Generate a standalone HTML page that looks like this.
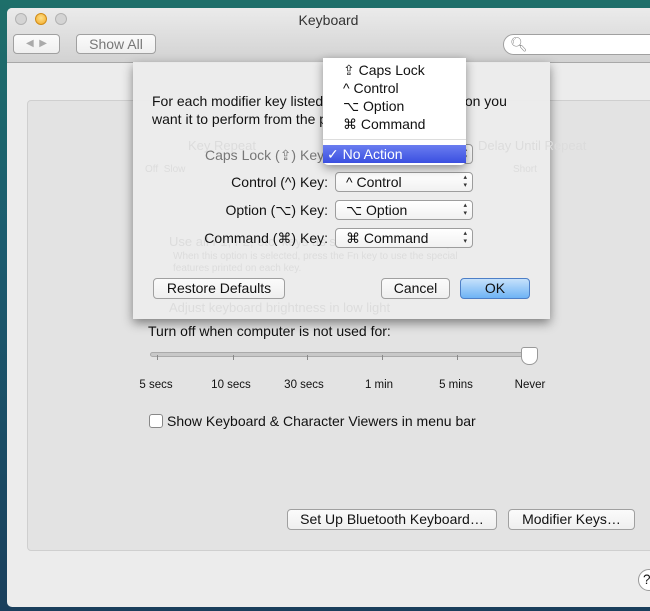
<!DOCTYPE html>
<html><head><style>
*{margin:0;padding:0;box-sizing:border-box}
body{width:650px;height:611px;overflow:hidden;background:linear-gradient(180deg,#1e6f6a 0%,#1b5b6e 40%,#1a3f5c 100%);font-family:"Liberation Sans",sans-serif;font-size:13.5px;color:#111;position:relative}
.win{position:absolute;left:7px;top:8px;width:650px;height:599px;background:#ececec;border-radius:5px 0 0 5px;overflow:hidden}
.tb{position:absolute;left:0;top:0;right:0;height:55px;background:linear-gradient(#ebebeb,#d2d2d2);border-bottom:1px solid #a8a8a8}
.light{position:absolute;top:5px;width:12px;height:12px;border-radius:50%;background:#d4d4d4;border:1px solid #b3b3b3}
.title{position:absolute;top:4px;left:0;right:7px;text-align:center;font-size:14px;color:#333}
.btn{position:absolute;background:linear-gradient(#fbfbfb,#efefef);border:1px solid #a0a0a0;border-radius:4px;text-align:center;font-size:14px}
.abs{position:absolute}
.box{position:absolute;left:20px;top:92px;width:640px;height:451px;border:1px solid #cfcfcf;border-radius:4px;background:#e3e3e3}
.sheet{position:absolute;left:133px;top:62px;width:417px;height:257px;background:rgba(236,236,236,.95);box-shadow:0 4px 10px rgba(0,0,0,.45)}
.pop{position:absolute;left:335px;width:138px;height:20px;background:linear-gradient(#fff,#f1f1f1);border:1px solid #9d9d9d;border-radius:4px;padding-left:10px;line-height:18px;font-size:14px}
.pop:after{content:"▴\A▾";white-space:pre;position:absolute;right:5px;top:1px;font-size:7px;line-height:8px;color:#333}
.lbl{position:absolute;width:200px;text-align:right;font-size:14px}
.menu{position:absolute;left:323px;top:58px;width:143px;height:107px;background:#fff;border-radius:0 0 5px 5px;box-shadow:0 3px 10px rgba(0,0,0,.4)}
.mi{position:absolute;left:20px;font-size:14px}
.tick{position:absolute;top:355px;width:1px;height:5px;background:#888}
.tl{position:absolute;top:379px;font-size:11.5px;width:60px;text-align:center}
.ghost{position:absolute;color:#dcdcdc;font-size:13px;white-space:nowrap}
</style></head><body>
<div class="win">
 <div class="tb">
  <div class="light" style="left:8px"></div>
  <div class="light" style="left:28px;background:radial-gradient(circle at 50% 40%,#fde08a,#f3a825);border-color:#d08c18"></div>
  <div class="light" style="left:48px"></div>
  <div class="title">Keyboard</div>
  <div class="btn" style="left:6px;top:26px;width:47px;height:20px;color:#aaa;font-size:10px;line-height:18px">◀ &nbsp;▶</div>
  <div class="btn" style="left:69px;top:26px;width:80px;height:20px;line-height:18px;color:#777">Show All</div>
  <div class="btn" style="left:496px;top:26px;width:160px;height:21px;border-radius:11px;background:#fff;text-align:left;padding-left:6px;color:#888;line-height:18px">&#x1F50D;&#xFE0E;</div>
 </div>
 <div class="box"></div>
</div>
<div class="abs" style="left:148px;top:323px;font-size:14px">Turn off when computer is not used for:</div>
<div class="abs" style="left:150px;width:380px;height:5px;border-radius:3px;background:#c8c8c8;border:1px solid #aaa;top:352px"></div>
<div class="abs" style="left:521px;top:347px;width:17px;height:18px;background:#fff;border:1px solid #999;border-radius:3px 3px 8px 8px"></div>
<div class="tick" style="left:157px"></div><div class="tick" style="left:233px"></div><div class="tick" style="left:307px"></div><div class="tick" style="left:382px"></div><div class="tick" style="left:457px"></div>
<div class="tl" style="left:126px">5 secs</div><div class="tl" style="left:201px">10 secs</div><div class="tl" style="left:274px">30 secs</div><div class="tl" style="left:349px">1 min</div><div class="tl" style="left:426px">5 mins</div><div class="tl" style="left:500px">Never</div>
<div class="abs" style="left:149px;top:414px;width:14px;height:14px;border:1px solid #888;border-radius:3px;background:#fff"></div>
<div class="abs" style="left:167px;top:413px;font-size:14px">Show Keyboard &amp; Character Viewers in menu bar</div>
<div class="btn" style="left:287px;top:509px;width:210px;height:21px;line-height:19px">Set Up Bluetooth Keyboard…</div>
<div class="btn" style="left:508px;top:509px;width:127px;height:21px;line-height:19px">Modifier Keys…</div>
<div class="abs" style="left:638px;top:569px;width:22px;height:22px;border-radius:50%;border:1px solid #999;background:#fff;padding-left:4px;line-height:20px">?</div>
<div class="sheet">
 <div class="ghost" style="left:55px;top:76px">Key Repeat</div>
 <div class="ghost" style="left:345px;top:76px">Delay Until Repeat</div>
 <div class="ghost" style="left:12px;top:102px;font-size:10px">Off &nbsp;Slow</div>
 <div class="ghost" style="left:380px;top:102px;font-size:10px">Short</div>
 <div class="ghost" style="left:36px;top:172px">Use all F1, F2, etc. keys as standard function keys</div>
 <div class="ghost" style="left:40px;top:189px;font-size:10px;line-height:12px">When this option is selected, press the Fn key to use the special<br>features printed on each key.</div>
 <div class="ghost" style="left:36px;top:238px">Adjust keyboard brightness in low light</div>
 <div class="abs" style="left:19px;top:30px;line-height:18px;font-size:14px">For each modifier key listed below, choose the action you<br>want it to perform from the pop-up menu:</div>
 <div class="lbl" style="top:85px;left:-5px;color:#777">Caps Lock (⇪) Key:</div>
 <div class="lbl" style="top:112px;left:-5px">Control (^) Key:</div>
 <div class="lbl" style="top:140px;left:-5px">Option (⌥) Key:</div>
 <div class="lbl" style="top:168px;left:-5px">Command (⌘) Key:</div>
 <div class="btn" style="left:20px;top:216px;width:132px;height:21px;line-height:19px">Restore Defaults</div>
 <div class="btn" style="left:248px;top:216px;width:69px;height:21px;line-height:19px">Cancel</div>
 <div class="btn" style="left:327px;top:216px;width:70px;height:21px;line-height:19px;background:linear-gradient(#c6e1fb,#6eb3f5);border-color:#4d7fc7">OK</div>
</div>
<div class="pop" style="top:144px;left:335px"></div>
<div class="pop" style="top:172px">^ Control</div>
<div class="pop" style="top:200px">⌥ Option</div>
<div class="pop" style="top:228px">⌘ Command</div>
<div class="menu">
 <div class="mi" style="top:4px">⇪ Caps Lock</div>
 <div class="mi" style="top:22px">^ Control</div>
 <div class="mi" style="top:40px">⌥ Option</div>
 <div class="mi" style="top:58px">⌘ Command</div>
 <div class="abs" style="left:0;right:0;top:81px;height:1px;background:#ddd"></div>
 <div class="abs" style="left:0;right:0;top:87px;height:18px;background:linear-gradient(#6a7df0,#3a4fe0);color:#fff;padding-left:4px;line-height:18px;font-size:14px">✓ No Action</div>
</div>
</body></html>
